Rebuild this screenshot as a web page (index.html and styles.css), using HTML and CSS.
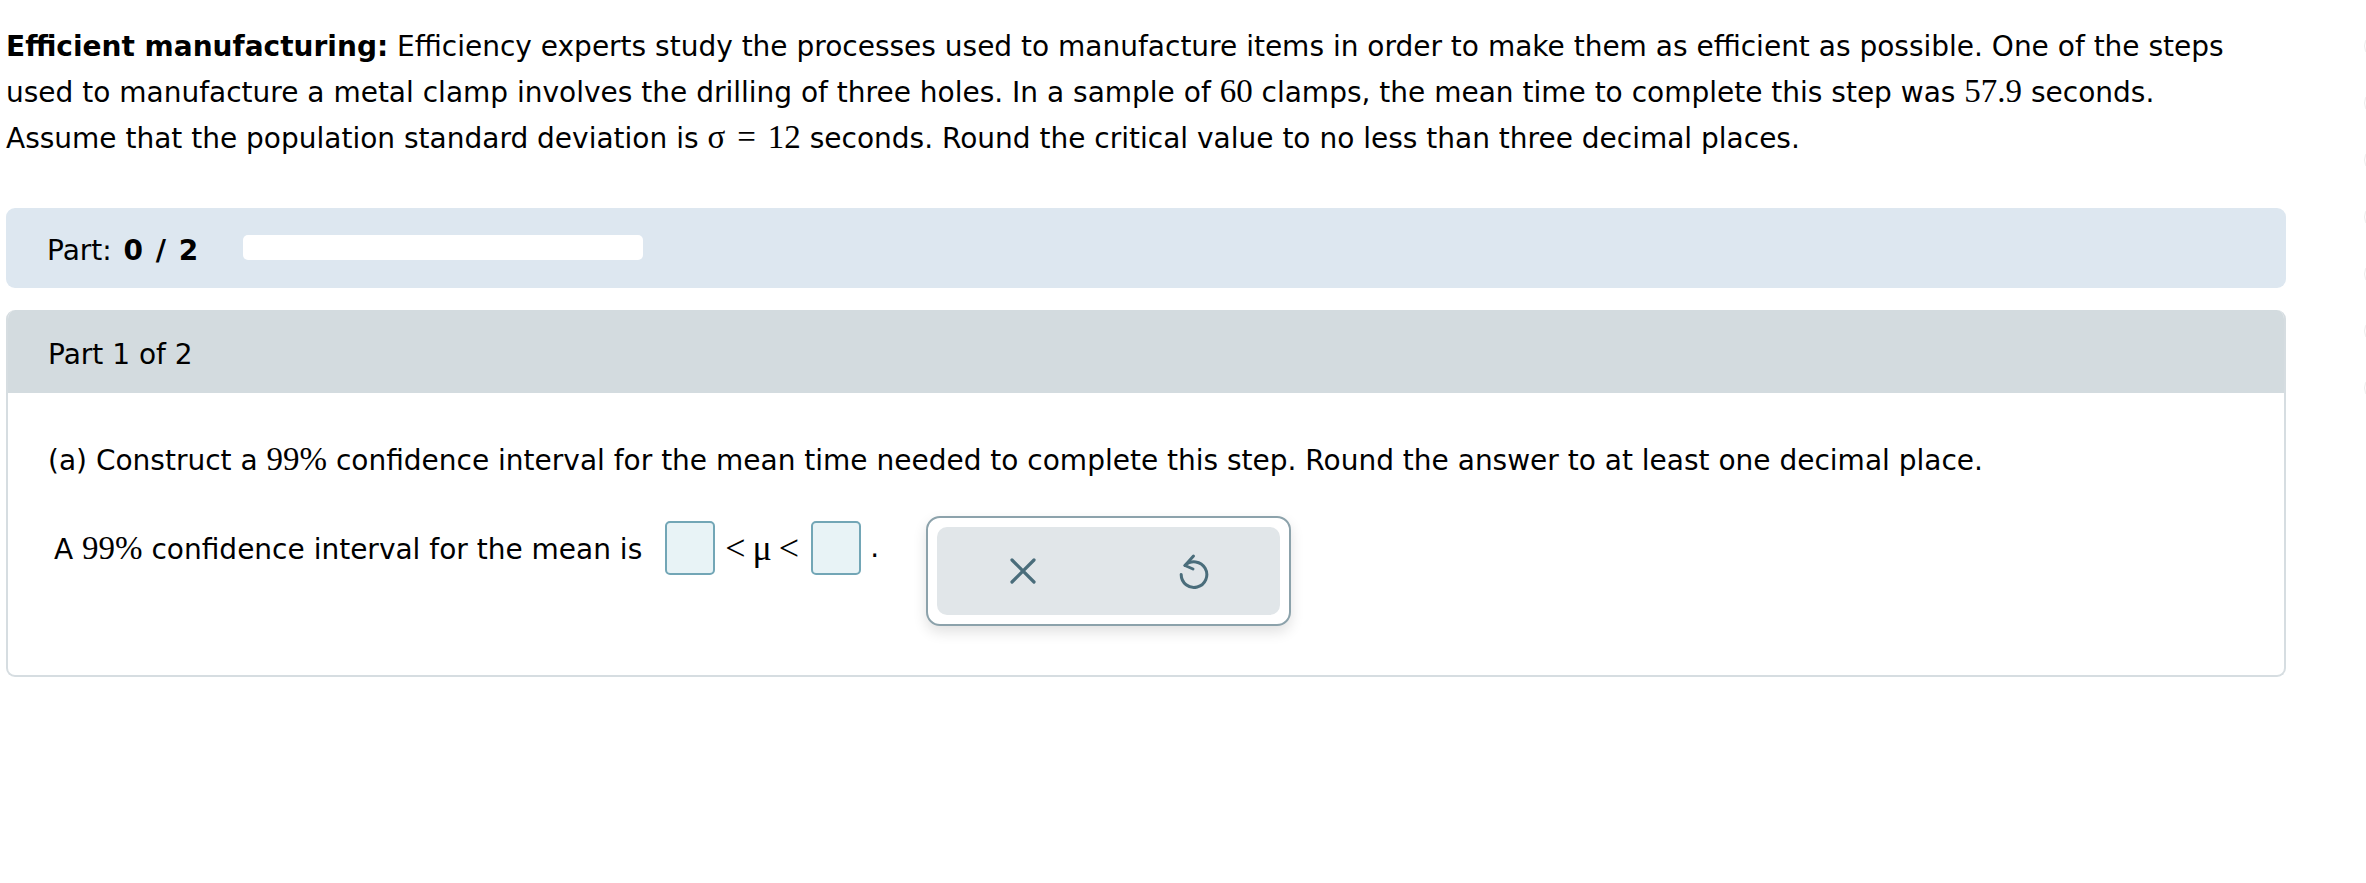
FILE: index.html
```html
<!DOCTYPE html>
<html>
<head>
<meta charset="utf-8">
<link rel="stylesheet" href="styles.css">
</head>
<body>
<div class="layout">
  <main class="main">
    <p class="intro"><b>Efficient manufacturing:</b> Efficiency experts study the processes used to manufacture items in order to make them as efficient as possible. One of the steps used to manufacture a metal clamp involves the drilling of three holes. In a sample of <span class="m">60</span> clamps, the mean time to complete this step was <span class="m">57.9</span> seconds. Assume that the population standard deviation is <span class="m">σ</span><span class="m eq">=</span><span class="m">12</span> seconds. Round the critical value to no less than three decimal places.</p>

    <div class="partbar">
      <span class="partlabel">Part: <b>0 / 2</b></span>
      <div class="track"></div>
    </div>

    <section class="card">
      <header class="card-head">Part 1 of 2</header>
      <div class="card-body">
        <p class="question">(a) Construct a <span class="m">99%</span> confidence interval for the mean time needed to complete this step. Round the answer to at least one decimal place.</p>
        <div class="answer-row">
          <div class="answer-line">
            <span class="lead">A <span class="m">99%</span> confidence interval for the mean is</span>
            <span class="box"></span>
            <span class="rels"><span class="m">&lt;</span><span class="m">μ</span><span class="m">&lt;</span></span>
            <span class="box"></span>
            <span class="dot">.</span>
          </div>
          <div class="tools">
            <div class="tools-inner">
              <button class="tool" aria-label="Clear">
                <svg width="26" height="26" viewBox="0 0 26 26"><path d="M2 2 L24 24 M24 2 L2 24" stroke="#4a6d7b" stroke-width="3.2" stroke-linecap="round" fill="none"/></svg>
              </button>
              <button class="tool" aria-label="Undo">
                <svg width="32" height="38" viewBox="0 0 32 38"><path d="M7 13.5 A12.8 12.8 0 1 1 3.2 22.5" stroke="#4a6d7b" stroke-width="3" stroke-linecap="round" fill="none"/><path d="M15.5 4 L7 13.5 L15 17" stroke="#4a6d7b" stroke-width="3" stroke-linecap="round" stroke-linejoin="round" fill="none"/></svg>
              </button>
            </div>
          </div>
        </div>
      </div>
    </section>
  </main>
  <aside class="rail">
    <span class="dot-btn"></span>
    <span class="dot-btn"></span>
    <span class="dot-btn"></span>
    <span class="dot-btn"></span>
    <span class="dot-btn"></span>
    <span class="dot-btn"></span>
    <span class="dot-btn"></span>
  </aside>
</div>
</body>
</html>
```

FILE: styles.css
```css
html, body {
  margin: 0;
  padding: 0;
  background: #ffffff;
}
body {
  font-family: "DejaVu Sans", Verdana, sans-serif;
  font-size: 28px;
  color: #000;
  overflow: hidden;
}
.layout {
  display: flex;
  align-items: flex-start;
  width: 2366px;
  height: 883px;
  overflow: hidden;
}
.main {
  width: 2280px;
  margin-left: 6px;
  flex: none;
}
.rail {
  margin-left: 78px;
  padding-top: 33px;
  display: flex;
  flex-direction: column;
  gap: 31px;
  flex: none;
}
.dot-btn {
  display: block;
  width: 24px;
  height: 24px;
  border: 1px solid #ececec;
  border-radius: 50%;
}
.intro {
  margin: 0;
  padding-top: 24px;
  line-height: 45px;
  width: 2245px;
}
.m {
  font-family: "Liberation Serif", "Times New Roman", serif;
  font-size: 33px;
}
.eq {
  margin: 0 12px;
}
.partbar {
  margin-top: 47px;
  height: 80px;
  background: #dde7f0;
  border-radius: 9px;
  display: flex;
  align-items: center;
  padding-left: 41px;
}
.partlabel {
  width: 196px;
  word-spacing: 3px;
  padding-top: 4px;
}
.track {
  width: 400px;
  height: 25px;
  margin-top: -2px;
  background: #fff;
  border-radius: 5px;
}
.card {
  margin-top: 22px;
  border: 2px solid #d6dde1;
  border-top: none;
  border-radius: 9px;
  overflow: hidden;
}
.card-head {
  height: 83px;
  box-sizing: border-box;
  padding-top: 5px;
  background: #d3dbdf;
  display: flex;
  align-items: center;
  padding-left: 40px;
}
.card-body {
  padding: 44px 0 49px 40px;
}
.question {
  margin: 0;
  line-height: 45px;
}
.answer-row {
  margin-top: 33px;
  display: flex;
  align-items: flex-start;
}
.answer-line {
  display: flex;
  align-items: center;
  height: 55px;
  margin-top: 4px;
  padding-left: 6px;
}
.lead {
  margin-right: 23px;
  padding-top: 2px;
}
.box {
  display: inline-block;
  width: 46px;
  height: 50px;
  background: #e8f3f6;
  border: 2px solid #72a6b6;
  border-radius: 5px;
}
.rels {
  display: inline-flex;
  align-items: center;
  gap: 7px;
  margin: 0 12px 0 10px;
}
.rels .m {
  font-size: 36px;
}
.dot {
  margin-left: 9px;
}
.tools {
  margin-left: 47px;
  border: 2px solid #8ca2ab;
  border-radius: 14px;
  background: #fff;
  box-shadow: 0 6px 14px rgba(0, 0, 0, 0.12);
  padding: 9px;
  box-sizing: border-box;
  width: 365px;
  height: 110px;
}
.tools-inner {
  height: 100%;
  background: #e1e6e9;
  border-radius: 10px;
  display: flex;
  align-items: center;
  justify-content: space-between;
  padding: 0 70px 0 73px;
}
.tool {
  border: none;
  background: transparent;
  padding: 0;
  display: flex;
  align-items: center;
  justify-content: center;
}
```
